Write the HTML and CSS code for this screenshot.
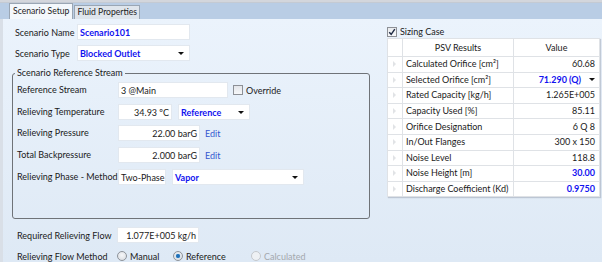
FILE: index.html
```html
<!DOCTYPE html>
<html>
<head>
<meta charset="utf-8">
<link rel="stylesheet" href="styles.css">
</head>
<body>
<div class="app">
  <div class="topline"></div>
  <div class="tabbar">
    <div class="tab active">Scenario Setup</div>
    <div class="tab">Fluid Properties</div>
  </div>
  <div class="content">
    <div class="left">
      <div class="toprows">
        <div class="trow">
          <span class="lbl">Scenario Name</span>
          <div class="box w113 bold blue">Scenario101</div>
        </div>
        <div class="trow">
          <span class="lbl">Scenario Type</span>
          <div class="box w113 bold blue sel">Blocked Outlet<span class="caret"></span></div>
        </div>
      </div>
      <fieldset class="group">
        <legend>Scenario Reference Stream</legend>
        <div class="ggrid">
          <span class="glbl">Reference Stream</span>
          <div class="gval">
            <div class="box w110">3 @Main</div>
            <span class="chk"></span><span class="chktxt">Override</span>
          </div>
          <span class="glbl">Relieving Temperature</span>
          <div class="gval">
            <div class="box w54 num">34.93 ºC</div>
            <div class="box w72 bold blue sel">Reference<span class="caret"></span></div>
          </div>
          <span class="glbl">Relieving Pressure</span>
          <div class="gval">
            <div class="box w82 num">22.00 barG</div>
            <span class="edit">Edit</span>
          </div>
          <span class="glbl">Total Backpressure</span>
          <div class="gval">
            <div class="box w82 num">2.000 barG</div>
            <span class="edit">Edit</span>
          </div>
          <span class="glbl">Relieving Phase - Method</span>
          <div class="gval">
            <div class="box w48">Two-Phase</div>
            <div class="box w132 bold blue sel">Vapor<span class="caret"></span></div>
          </div>
        </div>
      </fieldset>
      <div class="bottomrows">
        <div class="brow">
          <span class="blbl">Required Relieving Flow</span>
          <div class="box w82 num">1.077E+005 kg/h</div>
        </div>
        <div class="brow">
          <span class="blbl">Relieving Flow Method</span>
          <div class="radios">
            <span class="radio"><span class="rc"></span>Manual</span>
            <span class="radio"><span class="rc on"></span>Reference</span>
            <span class="radio dis"><span class="rc"></span>Calculated</span>
          </div>
        </div>
      </div>
    </div>
    <div class="right">
      <div class="sizing">
        <span class="chk on"><svg width="8" height="8" viewBox="0 0 8 8"><path d="M1.2 4.2 L3.2 6.3 L6.8 1.2" fill="none" stroke="#1e2a44" stroke-width="1.4"/></svg></span>
        <span class="chktxt">Sizing Case</span>
      </div>
      <table class="res">
        <thead>
          <tr><th class="rh"></th><th class="c1">PSV Results</th><th class="c2">Value</th></tr>
        </thead>
        <tbody>
          <tr><td class="rh"><span class="tri"></span></td><td>Calculated Orifice [cm²]</td><td class="v">60.68</td></tr>
          <tr><td class="rh"><span class="tri"></span></td><td>Selected Orifice [cm²]</td><td class="v bold blue">71.290 (Q)<span class="caret tcaret"></span></td></tr>
          <tr><td class="rh"><span class="tri"></span></td><td>Rated Capacity [kg/h]</td><td class="v">1.265E+005</td></tr>
          <tr><td class="rh"><span class="tri"></span></td><td>Capacity Used [%]</td><td class="v">85.11</td></tr>
          <tr><td class="rh"><span class="tri"></span></td><td>Orifice Designation</td><td class="v">6 Q 8</td></tr>
          <tr><td class="rh"><span class="tri"></span></td><td>In/Out Flanges</td><td class="v">300 x 150</td></tr>
          <tr><td class="rh"><span class="tri"></span></td><td>Noise Level</td><td class="v">118.8</td></tr>
          <tr><td class="rh"><span class="tri"></span></td><td>Noise Height [m]</td><td class="v bold blue">30.00</td></tr>
          <tr><td class="rh"><span class="tri"></span></td><td>Discharge Coefficient (Kd)</td><td class="v bold blue">0.9750</td></tr>
        </tbody>
      </table>
    </div>
  </div>
</div>
</body>
</html>
```
FILE: styles.css
```css
* { box-sizing: border-box; }
html, body { margin: 0; padding: 0; }
body {
  width: 602px;
  height: 262px;
  overflow: hidden;
  font-family: "Lato", "Open Sans", sans-serif;
  font-size: 9px;
  color: #1a1a1a;
  background: #e4edf7;
  white-space: nowrap;
}
.app { width: 602px; height: 262px; display: flex; flex-direction: column; }
.topline { height: 3px; background: #d3d6dc; border-bottom: 1px solid #c4cad3; }
.tabbar {
  height: 16px;
  background: #b9cde5;
  display: flex;
  align-items: flex-end;
  padding-left: 9px;
}
.tab {
  height: 14px;
  line-height: 13px;
  padding: 0 2px;
  border: 1px solid #9aa6b4;
  border-bottom: none;
  background: #dfe5ec;
  color: #222;
  margin-right: 1px;
  font-size: 8.6px;
}
.tab.active {
  height: 16px;
  line-height: 15px;
  background: #f4f8fc;
  padding: 0 3px;
}
.content {
  flex: 1;
  display: flex;
  border-left: 3px solid #d9dfe7;
  background: linear-gradient(#ebf3fc, #dee9f5);
  min-height: 0;
}
.left { width: 384px; flex-shrink: 0; padding: 5px 17px 0 9px; }
.right { flex: 1; padding-top: 7px; }

.box {
  flex-shrink: 0;
  height: 16px;
  line-height: 15px;
  background: #fff;
  border: 1px solid #e2e8ef;
  padding: 0 2px;
  white-space: nowrap;
  position: relative;
}
.bold { font-weight: bold; }
.blue { color: #1212f0; }
.num { text-align: right; }
.sel { padding-right: 14px; }
.caret {
  position: absolute;
  right: 5px;
  top: 6px;
  width: 0; height: 0;
  border-left: 3px solid transparent;
  border-right: 3px solid transparent;
  border-top: 3px solid #111;
}
.w113 { width: 113px; }
.w110 { width: 110px; }
.w54 { width: 54px; }
.w72 { width: 72px; }
.w82 { width: 82px; }
.w48 { width: 48px; }
.w132 { width: 132px; }

.toprows { display: flex; flex-direction: column; gap: 5px; padding-left: 3px; }
.trow { display: flex; align-items: center; height: 16px; }
.lbl { width: 62px; flex-shrink: 0; }

.group {
  margin: 6px 0 0 0;
  width: 358px;
  height: 152px;
  border: 1px solid #6f7378;
  border-radius: 3px;
  padding: 0 0 0 2px;
}
.group legend { padding: 0 2px; line-height: 12px; }
.ggrid {
  display: grid;
  grid-template-columns: 101px 1fr;
  grid-auto-rows: 16px;
  row-gap: 5.7px;
  padding: 3px 0 0 2px;
}
.glbl { line-height: 16px; }
.gval { display: flex; align-items: center; gap: 6px; }
.chk {
  display: inline-flex;
  align-items: center;
  justify-content: center;
  flex-shrink: 0;
  width: 10px; height: 10px;
  border: 1px solid #8d9096;
  background: linear-gradient(#e4e6ea, #f6f7f9);
}
.gval .chk { margin-left: -1px; }
.chktxt { margin-left: 3px; }
.gval .chktxt { margin-left: -3px; }
.edit { color: #3558d0; margin-left: -1px; }

.bottomrows {
  display: flex;
  flex-direction: column;
  gap: 5px;
  margin-top: 8px;
  padding-left: 5px;
}
.brow { display: flex; align-items: center; height: 16px; }
.blbl { width: 100px; flex-shrink: 0; }
.radios { display: flex; }
.radio { display: inline-flex; align-items: center; }
.radio:nth-child(1) { width: 56px; }
.radio:nth-child(2) { width: 78px; }
.rc {
  flex-shrink: 0;
  width: 10px; height: 10px;
  border-radius: 50%;
  border: 1px solid #8e939a;
  background: radial-gradient(circle at 50% 40%, #f6f7f9, #d6d9de);
  margin-right: 3px;
  position: relative;
}
.rc.on::after {
  content: "";
  position: absolute;
  left: 2px; top: 2px;
  width: 4px; height: 4px;
  border-radius: 50%;
  background: #1f6fb8;
  box-shadow: 0 0 1px #4aa0e0;
}
.radio.dis { color: #a4a8ad; }
.radio.dis .rc { border-color: #c4c8cd; background: #eef1f4; }

.sizing { display: flex; align-items: center; height: 11px; margin-bottom: 1px; }
.sizing .chk { background: linear-gradient(#e9ebee, #f7f8fa); }

.res {
  border-collapse: collapse;
  width: 213px;
  background: #fff;
  box-shadow: 1px 1px 1px rgba(120,130,145,0.35);
}
.res th, .res td {
  border: 1px solid #dfe2e6;
  padding: 0 3px;
  white-space: nowrap;
  font-weight: normal;
}
.res th { height: 18px; text-align: center; }
.res td { height: 15.6px; line-height: 14px; }
.res .rh { width: 15px; padding: 0; }
.res .c1 { width: 111px; }
.res td.v { text-align: right; padding-right: 4px; position: relative; }
.res td.v.bold { font-weight: bold; }
.tcaret { position: static; display: inline-block; margin-left: 8px; vertical-align: 2px; }
.tri {
  display: block;
  margin-left: 5px;
  width: 0; height: 0;
  border-top: 3px solid transparent;
  border-bottom: 3px solid transparent;
  border-left: 3px solid #e1e3e6;
}
```
